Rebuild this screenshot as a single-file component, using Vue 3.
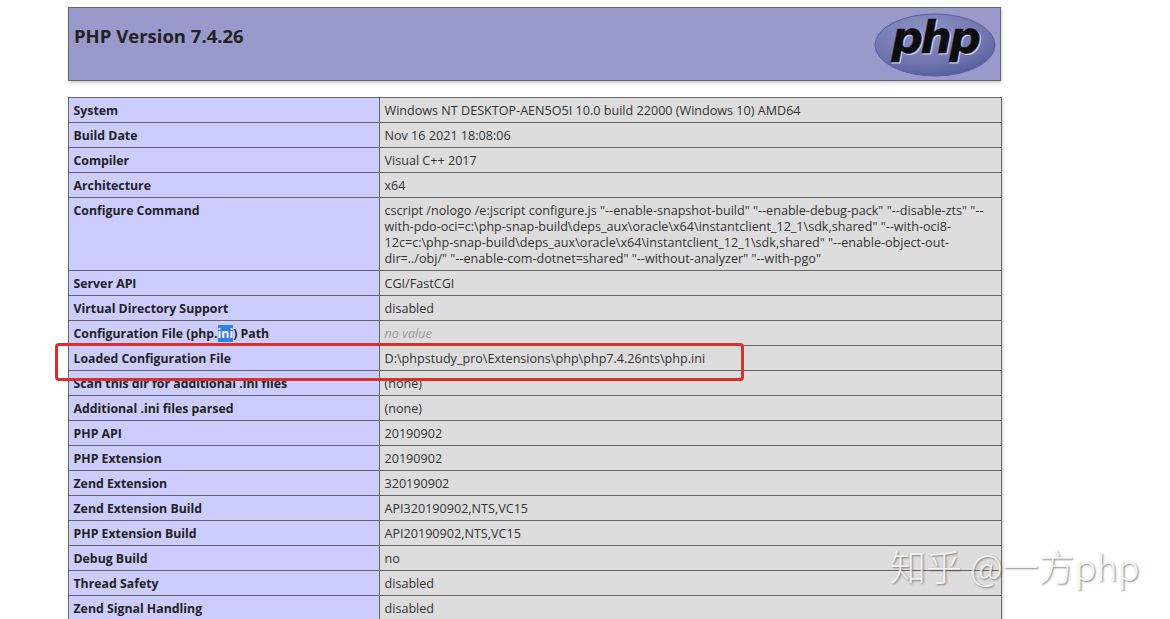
<script setup>
const rows = [
  ['System', 'Windows NT DESKTOP-AEN5O5I 10.0 build 22000 (Windows 10) AMD64'],
  ['Build Date', 'Nov 16 2021 18:08:06'],
  ['Compiler', 'Visual C++ 2017'],
  ['Architecture', 'x64'],
  ['Configure Command', 'cscript /nologo /e:jscript configure.js "--enable-snapshot-build" "--enable-debug-pack" "--disable-zts" "--with-pdo-oci=c:\\php-snap-build\\deps_aux\\oracle\\x64\\instantclient_12_1\\sdk,shared" "--with-oci8-12c=c:\\php-snap-build\\deps_aux\\oracle\\x64\\instantclient_12_1\\sdk,shared" "--enable-object-out-dir=../obj/" "--enable-com-dotnet=shared" "--without-analyzer" "--with-pgo"'],
  ['Server API', 'CGI/FastCGI'],
  ['Virtual Directory Support', 'disabled'],
  ['CONFIG', 'no value'],
  ['Loaded Configuration File', 'D:\\phpstudy_pro\\Extensions\\php\\php7.4.26nts\\php.ini'],
  ['Scan this dir for additional .ini files', '(none)'],
  ['Additional .ini files parsed', '(none)'],
  ['PHP API', '20190902'],
  ['PHP Extension', '20190902'],
  ['Zend Extension', '320190902'],
  ['Zend Extension Build', 'API320190902,NTS,VC15'],
  ['PHP Extension Build', 'API20190902,NTS,VC15'],
  ['Debug Build', 'no'],
  ['Thread Safety', 'disabled'],
  ['Zend Signal Handling', 'disabled'],
]
</script>

<template>
  <div class="page">
    <div class="center">
      <header class="head">
        <h1>PHP Version 7.4.26</h1>
        <svg class="logo" width="122" height="64" viewBox="0 0 122 64" role="img" aria-label="PHP logo">
          <defs>
            <radialGradient id="oval" cx="42%" cy="28%" r="75%">
              <stop offset="0" stop-color="#8f94c6" />
              <stop offset="0.7" stop-color="#6f74ae" />
              <stop offset="1" stop-color="#565c9c" />
            </radialGradient>
          </defs>
          <ellipse cx="61" cy="32" rx="60" ry="31" fill="url(#oval)" stroke="#5a5f9f" />
          <text x="62" y="41" text-anchor="middle" class="logo-shadow">php</text>
          <text x="61" y="40" text-anchor="middle" class="logo-text">php</text>
        </svg>
      </header>
      <table class="info">
        <colgroup>
          <col class="c1" />
          <col class="c2" />
        </colgroup>
        <tbody>
          <tr v-for="r in rows" :key="r[0]">
            <td class="e">
              <template v-if="r[0] === 'CONFIG'">Configuration File (php.<mark>ini</mark>) Path</template>
              <template v-else>{{ r[0] }}</template>
            </td>
            <td class="v" :class="{ nv: r[1] === 'no value' }">{{ r[1] }}</td>
          </tr>
        </tbody>
      </table>
    </div>
    <div class="callout"></div>
    <div class="mark-wm">知乎 @一方php</div>
  </div>
</template>

<style>
html, body { margin: 0; overflow: hidden; background: #fff; }
</style>

<style scoped>
.page {
  position: relative;
  width: 1170px;
  height: 619px;
  overflow: hidden;
  background: #fff;
  padding: 7px 0 0 68px;
  box-sizing: border-box;
  font-family: "Open Sans", "Noto Sans", sans-serif;
  color: #222;
}
.center { width: 933px; }
.head {
  height: 74px;
  box-sizing: border-box;
  border: 1px solid #666;
  background: #9999cc;
  box-shadow: 1px 2px 3px #ccc;
  display: flex;
  justify-content: space-between;
  padding: 5px 4px 0 5px;
}
h1 {
  margin: 12px 0 0;
  font-size: 18.5px;
  line-height: 22px;
  font-weight: 700;
  color: #222;
}
.logo { flex: none; }
.logo-text, .logo-shadow {
  font-family: "DejaVu Sans", sans-serif;
  font-style: italic;
  font-weight: 700;
  font-size: 44px;
  letter-spacing: -2.5px;
}
.logo-text { fill: #0c0c10; stroke: #0c0c10; stroke-width: 0.5; }
.logo-shadow { fill: #c9cbe6; stroke: #c9cbe6; stroke-width: 1.2; }
.info {
  margin-top: 16px;
  width: 933px;
  table-layout: fixed;
  border-collapse: collapse;
  box-shadow: 1px 2px 3px #ccc;
  font-size: 12.6px;
  line-height: 16px;
}
.c1 { width: 311px; }
.c2 { width: 622px; }
td {
  border: 1px solid #666;
  padding: 5px 5px 3px 4.5px;
  vertical-align: baseline;
  height: 16px;
}
.e { background: #ccccff; font-weight: 700; color: #222; font-size: 12.3px; }
.v { background: #dddddd; color: #333; overflow-wrap: break-word; }
.nv { color: #999; font-style: italic; }
mark { background: #2f80e0; color: #fff; }
.callout {
  position: absolute;
  left: 55px;
  top: 343px;
  width: 683px;
  height: 32px;
  border: 3px solid #d9302c;
  border-radius: 4px;
}
.mark-wm {
  position: absolute;
  left: 890px;
  top: 541px;
  font-family: "Noto Sans CJK SC", "Noto Sans", sans-serif;
  font-size: 36px;
  font-weight: 300;
  line-height: 48px;
  white-space: nowrap;
  color: rgba(255, 255, 255, 0.85);
  text-shadow: 1px 1px 2px rgba(90, 90, 90, 0.75);
}
</style>
